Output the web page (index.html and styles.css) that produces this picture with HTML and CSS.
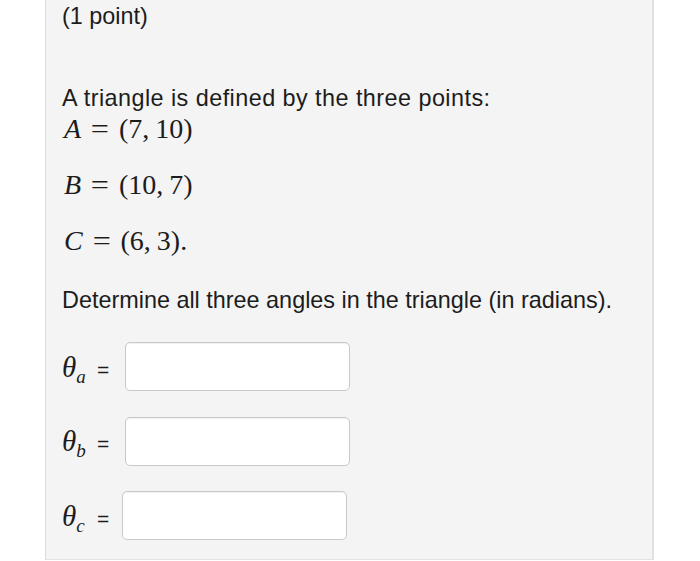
FILE: index.html
```html
<!DOCTYPE html>
<html>
<head>
<meta charset="utf-8">
<link rel="stylesheet" href="styles.css">
</head>
<body>
<div class="panel">
  <p class="points">(1 point)</p>
  <p class="intro">A triangle is defined by the three points:</p>
  <p class="math first"><i>A</i><span class="eq">=</span>(7,<span class="thin"></span>10)</p>
  <p class="math"><i>B</i><span class="eq">=</span>(10,<span class="thin"></span>7)</p>
  <p class="math"><i>C</i><span class="eq">=</span>(6,<span class="thin"></span>3).</p>
  <p class="task">Determine all three angles in the triangle (in radians).</p>
  <div class="answers">
    <div class="row">
      <span class="label"><i>θ</i><sub>a</sub></span><span class="sign">=</span>
      <span class="box"></span>
    </div>
    <div class="row">
      <span class="label"><i>θ</i><sub>b</sub></span><span class="sign">=</span>
      <span class="box"></span>
    </div>
    <div class="row">
      <span class="label"><i>θ</i><sub>c</sub></span><span class="sign narrow">=</span>
      <span class="box"></span>
    </div>
  </div>
</div>
</body>
</html>
```

FILE: styles.css
```css
html, body {
  margin: 0;
  padding: 0;
  background: #ffffff;
}

body {
  font-family: "Liberation Sans", Arial, sans-serif;
  color: #1c1c1c;
}

.panel {
  margin-left: 45px;
  background: #f4f4f4;
  border-left: 1px solid #dcdcdc;
  border-right: 2px solid #e0e0e0;
  border-bottom: 1px solid #e2e2e2;
  padding: 1px 0 19px 16px;
  box-sizing: content-box;
  width: 590px;
}

.panel p {
  margin: 0;
}

.points,
.intro,
.task {
  font-size: 23.4px;
  line-height: 30px;
}

.intro {
  margin-top: 52px !important;
  letter-spacing: 0.45px;
}

.math {
  font-family: "Liberation Serif", "Times New Roman", serif;
  font-size: 28px;
  line-height: 26px;
  margin-top: 30px !important;
  padding-left: 2px;
}

.math.first {
  margin-top: 3px !important;
}

.eq {
  margin: 0 11px;
  display: inline-block;
  transform: scaleX(1.15);
}

.thin {
  display: inline-block;
  width: 6px;
}

.task {
  margin-top: 31px !important;
}

.answers {
  margin-top: 27px;
  display: flex;
  flex-direction: column;
  gap: 25.5px;
}

.row {
  display: flex;
  align-items: center;
  height: 49px;
}

.label {
  font-family: "Liberation Serif", "Times New Roman", serif;
  font-size: 29px;
  line-height: 26px;
  width: 29px;
  white-space: nowrap;
}

.label sub {
  font-style: italic;
  font-size: 19px;
  vertical-align: -6px;
  line-height: 0;
  margin-left: 0;
}

.sign {
  font-family: "Liberation Sans", Arial, sans-serif;
  font-size: 21px;
  margin-left: 6px;
  padding-top: 6px;
  width: 28px;
}

.sign.narrow {
  width: 25px;
}

.box {
  display: block;
  width: 223px;
  height: 47px;
  background: #ffffff;
  border: 1px solid #c9c9c9;
  border-radius: 5px;
  box-shadow: inset 0 1px 1px rgba(0, 0, 0, 0.06);
}
```
